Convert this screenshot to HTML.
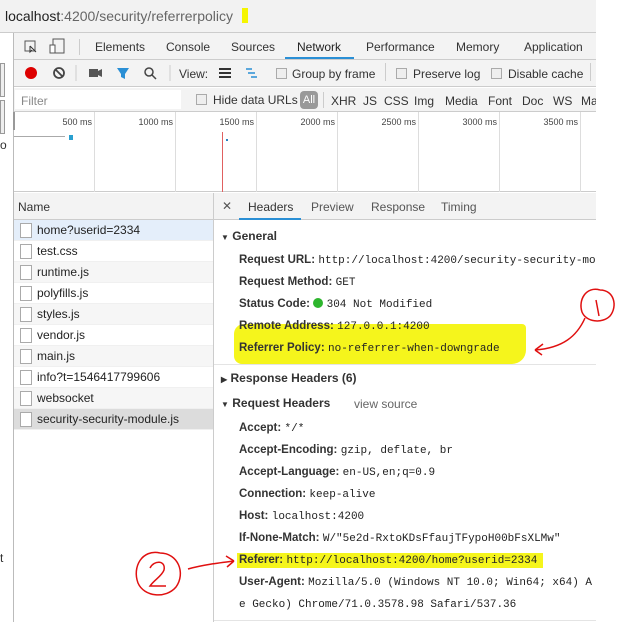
<!DOCTYPE html>
<html><head><style>
*{margin:0;padding:0;box-sizing:border-box}
body{width:617px;height:622px;overflow:hidden;background:#fff;position:relative;font-family:"Liberation Sans",sans-serif;font-size:12px;color:#303030}
.a{position:absolute;white-space:nowrap}
.m{font-family:"Liberation Mono",monospace;font-size:11px;color:#222}
.b{color:#333;font-weight:bold;font-size:11.5px}
.row{position:absolute;left:14px;width:199px;height:21px;line-height:21px;padding-left:23px;font-size:12px;color:#222;border-bottom:1px solid #f0f0f0}
.row i{position:absolute;left:6px;top:3px;width:12px;height:15px;border:1px solid #aaa;background:#fff}
.cb{position:absolute;width:11px;height:11px;border:1px solid #aaa;background:#eee}
</style></head><body>
<div class="a" style="left:0;top:0;width:596px;height:32px;background:#f2f2f2"></div>
<div class="a" style="left:5px;top:8px;font-size:14px;color:#222">localhost<span style="color:#666">:4200/security/referrerpolicy</span></div>
<div class="a" style="left:242px;top:8px;width:6px;height:15px;background:#f5f500"></div>
<div class="a" style="left:0;top:32px;width:596px;height:1px;background:#ccc"></div>
<div class="a" style="left:0;top:63px;width:5px;height:34px;border:1px solid #999;background:#eee"></div>
<div class="a" style="left:0;top:100px;width:5px;height:34px;border:1px solid #999;background:#eee"></div>
<div class="a" style="left:0;top:138px;font-size:12px">o</div>
<div class="a" style="left:0;top:551px;font-size:12px">t</div>
<div class="a" style="left:13px;top:33px;width:1px;height:589px;background:#bbb"></div>
<!-- tabs -->
<div class="a" style="left:14px;top:33px;width:582px;height:27px;background:#f3f3f3;border-bottom:1px solid #ccc"></div>
<svg class="a" style="left:0;top:33px" width="80" height="27"><rect x="25" y="8" width="10" height="10" fill="none" stroke="#555"/><path d="M30 13l6 6M30 13v6l2-2" stroke="#333" fill="none"/><rect x="53" y="6" width="11" height="14" fill="none" stroke="#555"/><rect x="50" y="12" width="5" height="8" fill="#fff" stroke="#555"/></svg>
<div class="a" style="left:79px;top:39px;width:1px;height:16px;background:#ccc"></div>
<div class="a" style="left:95px;top:40px;color:#333">Elements</div>
<div class="a" style="left:166px;top:40px;color:#333">Console</div>
<div class="a" style="left:231px;top:40px;color:#333">Sources</div>
<div class="a" style="left:297px;top:40px;color:#222">Network</div>
<div class="a" style="left:285px;top:57px;width:69px;height:2px;background:#2a8fd5"></div>
<div class="a" style="left:366px;top:40px;color:#333">Performance</div>
<div class="a" style="left:456px;top:40px;color:#333">Memory</div>
<div class="a" style="left:524px;top:40px;color:#333">Application</div>
<div class="a" style="left:14px;top:60px;width:582px;height:27px;background:#f3f3f3;border-bottom:1px solid #ccc"></div>
<svg class="a" style="left:0;top:60px" width="270" height="27"><circle cx="31" cy="13" r="6" fill="#d00"/><circle cx="59" cy="13" r="5" fill="none" stroke="#444" stroke-width="1.8"/><path d="M55 9l8 8" stroke="#444" stroke-width="1.8"/><line x1="76" y1="5" x2="76" y2="21" stroke="#ccc"/><rect x="89" y="9" width="9" height="8" fill="#555"/><path d="M98 11l4-2v8l-4-2z" fill="#555"/><path d="M117 8h12l-4 6v5l-4-2v-3z" fill="#2a8fd5"/><circle cx="149" cy="12" r="4" fill="none" stroke="#444" stroke-width="1.5"/><path d="M152 15l4 4" stroke="#444" stroke-width="1.5"/><line x1="170" y1="5" x2="170" y2="21" stroke="#ccc"/><path d="M219 9h12M219 13h12M219 17h12" stroke="#333" stroke-width="2"/><path d="M246 9h6M248 13h7M251 17h6" stroke="#2a8fd5" stroke-width="1.6"/></svg>
<div class="a" style="left:179px;top:67px;color:#333">View:</div>
<span class="cb" style="left:276px;top:68px"></span><div class="a" style="left:292px;top:67px;color:#333">Group by frame</div>
<div class="a" style="left:385px;top:63px;width:1px;height:18px;background:#ccc"></div>
<span class="cb" style="left:396px;top:68px"></span><div class="a" style="left:413px;top:67px;color:#333">Preserve log</div>
<span class="cb" style="left:491px;top:68px"></span><div class="a" style="left:508px;top:67px;color:#333">Disable cache</div>
<div class="a" style="left:590px;top:63px;width:1px;height:18px;background:#ccc"></div>
<div class="a" style="left:14px;top:88px;width:582px;height:24px;background:#f3f3f3;border-bottom:1px solid #ccc"></div>
<div class="a" style="left:15px;top:90px;width:166px;height:19px;background:#fff"></div>
<div class="a" style="left:21px;top:94px;color:#888">Filter</div>
<span class="cb" style="left:196px;top:94px"></span><div class="a" style="left:213px;top:93px;color:#333">Hide data URLs</div>
<div class="a" style="left:300px;top:91px;width:18px;height:18px;border-radius:4px;background:#999;color:#fff;font-size:11px;line-height:18px;text-align:center">All</div>
<div class="a" style="left:323px;top:92px;width:1px;height:16px;background:#ccc"></div>
<div class="a" style="left:331px;top:94px;color:#333">XHR</div>
<div class="a" style="left:363px;top:94px;color:#333">JS</div>
<div class="a" style="left:384px;top:94px;color:#333">CSS</div>
<div class="a" style="left:414px;top:94px;color:#333">Img</div>
<div class="a" style="left:445px;top:94px;color:#333">Media</div>
<div class="a" style="left:488px;top:94px;color:#333">Font</div>
<div class="a" style="left:522px;top:94px;color:#333">Doc</div>
<div class="a" style="left:553px;top:94px;color:#333">WS</div>
<div class="a" style="left:581px;top:94px;color:#333">Ma</div>
<!-- timeline -->
<div class="a" style="left:14px;top:112px;width:582px;height:80px;border-bottom:1px solid #ccc"></div>
<div class="a" style="left:13px;top:112px;width:2px;height:18px;background:#999"></div>
<div style="position:absolute;left:0;top:117px;font-size:9px;color:#444">
<span class="a" style="right:-92px;width:50px;text-align:right;left:42px">500 ms</span><span class="a" style="left:123px;width:50px;text-align:right">1000 ms</span><span class="a" style="left:204px;width:50px;text-align:right">1500 ms</span><span class="a" style="left:285px;width:50px;text-align:right">2000 ms</span><span class="a" style="left:366px;width:50px;text-align:right">2500 ms</span><span class="a" style="left:447px;width:50px;text-align:right">3000 ms</span><span class="a" style="left:528px;width:50px;text-align:right">3500 ms</span></div>
<div class="a" style="left:94px;top:112px;width:1px;height:80px;background:#ddd"></div>
<div class="a" style="left:175px;top:112px;width:1px;height:80px;background:#ddd"></div>
<div class="a" style="left:256px;top:112px;width:1px;height:80px;background:#ddd"></div>
<div class="a" style="left:337px;top:112px;width:1px;height:80px;background:#ddd"></div>
<div class="a" style="left:418px;top:112px;width:1px;height:80px;background:#ddd"></div>
<div class="a" style="left:499px;top:112px;width:1px;height:80px;background:#ddd"></div>
<div class="a" style="left:580px;top:112px;width:1px;height:80px;background:#ddd"></div>
<div class="a" style="left:222px;top:132px;width:1px;height:60px;background:#e06060"></div>
<div class="a" style="left:14px;top:136px;width:51px;height:1px;background:#aaa"></div>
<div class="a" style="left:69px;top:135px;width:4px;height:5px;background:#2aa0d0"></div>
<div class="a" style="left:226px;top:139px;width:2px;height:2px;background:#2a80c0"></div>
<!-- left list -->
<div class="a" style="left:14px;top:193px;width:199px;height:27px;background:#f3f3f3;border-bottom:1px solid #ccc"></div>
<div class="a" style="left:18px;top:200px;color:#333">Name</div>
<div class="a" style="left:213px;top:193px;width:1px;height:429px;background:#ccc"></div>
<div class="row" style="top:220px;background:#e4eefa"><i></i>home?userid=2334</div>
<div class="row" style="top:241px"><i></i>test.css</div>
<div class="row" style="top:262px;background:#f6f6f6"><i></i>runtime.js</div>
<div class="row" style="top:283px"><i></i>polyfills.js</div>
<div class="row" style="top:304px;background:#f6f6f6"><i></i>styles.js</div>
<div class="row" style="top:325px"><i></i>vendor.js</div>
<div class="row" style="top:346px;background:#f6f6f6"><i></i>main.js</div>
<div class="row" style="top:367px"><i></i>info?t=1546417799606</div>
<div class="row" style="top:388px;background:#f6f6f6"><i></i>websocket</div>
<div class="row" style="top:409px;background:#dcdcdc"><i></i>security-security-module.js</div>
<!-- right -->
<div class="a" style="left:214px;top:193px;width:382px;height:27px;background:#f3f3f3;border-bottom:1px solid #ccc"></div>
<div class="a" style="left:222px;top:199px;color:#555">✕</div>
<div class="a" style="left:248px;top:200px;color:#333">Headers</div>
<div class="a" style="left:239px;top:218px;width:62px;height:2px;background:#2a8fd5"></div>
<div class="a" style="left:311px;top:200px;color:#555">Preview</div>
<div class="a" style="left:371px;top:200px;color:#555">Response</div>
<div class="a" style="left:441px;top:200px;color:#555">Timing</div>
<div class="a" style="left:221px;top:229px;font-weight:bold;font-size:12px;color:#333"><span style="font-size:8px">▼</span> General</div>
<div class="a" style="left:234px;top:324px;width:292px;height:40px;background:#f5f51c;border-radius:10px 4px 14px 8px"></div>
<div class="a" style="left:239px;top:252px"><span class="b">Request URL:</span> <span class="m">http://localhost:4200/security-security-mo</span></div>
<div class="a" style="left:239px;top:274px"><span class="b">Request Method:</span> <span class="m">GET</span></div>
<div class="a" style="left:239px;top:296px"><span class="b">Status Code:</span> <span style="display:inline-block;width:10px;height:10px;border-radius:50%;background:#2db52d;vertical-align:-1px"></span> <span class="m">304 Not Modified</span></div>
<div class="a" style="left:239px;top:318px"><span class="b">Remote Address:</span> <span class="m">127.0.0.1:4200</span></div>
<div class="a" style="left:239px;top:340px"><span class="b">Referrer Policy:</span> <span class="m">no-referrer-when-downgrade</span></div>
<div class="a" style="left:214px;top:364px;width:382px;height:1px;background:#e4e4e4"></div>
<div class="a" style="left:221px;top:371px;font-weight:bold;color:#333"><span style="font-size:8px">▶</span> Response Headers (6)</div>
<div class="a" style="left:221px;top:396px;font-weight:bold;color:#333"><span style="font-size:8px">▼</span> Request Headers</div>
<div class="a" style="left:354px;top:397px;color:#666">view source</div>
<div class="a" style="left:237px;top:553px;width:306px;height:15px;background:#f5f51c"></div>
<div class="a" style="left:239px;top:420px"><span class="b">Accept:</span> <span class="m">*/*</span></div>
<div class="a" style="left:239px;top:442px"><span class="b">Accept-Encoding:</span> <span class="m">gzip, deflate, br</span></div>
<div class="a" style="left:239px;top:464px"><span class="b">Accept-Language:</span> <span class="m">en-US,en;q=0.9</span></div>
<div class="a" style="left:239px;top:486px"><span class="b">Connection:</span> <span class="m">keep-alive</span></div>
<div class="a" style="left:239px;top:508px"><span class="b">Host:</span> <span class="m">localhost:4200</span></div>
<div class="a" style="left:239px;top:530px"><span class="b">If-None-Match:</span> <span class="m">W/"5e2d-RxtoKDsFfaujTFypoH00bFsXLMw"</span></div>
<div class="a" style="left:239px;top:552px"><span class="b">Referer:</span> <span class="m">http://localhost:4200/home?userid=2334</span></div>
<div class="a" style="left:239px;top:574px"><span class="b">User-Agent:</span> <span class="m">Mozilla/5.0 (Windows NT 10.0; Win64; x64) A</span></div>
<div class="a" style="left:239px;top:596px"><span class="m">e Gecko) Chrome/71.0.3578.98 Safari/537.36</span></div>
<div class="a" style="left:214px;top:620px;width:382px;height:1px;background:#e4e4e4"></div>
<div class="a" style="left:596px;top:0;width:21px;height:622px;background:#fff"></div>
<svg class="a" style="left:0;top:0" width="617" height="622"><g fill="none" stroke="#e01010" stroke-width="1.5"><path d="M600 290c-14-4-22 10-18 22 4 10 20 12 28 4 8-10 4-26-10-26"/><path d="M596 300l3 16"/><path d="M585 318c-8 18-22 30-50 32M535 350l8-6M535 350l7 5"/><path d="M160 553c-18-4-28 14-22 30 6 14 28 16 38 4 10-14 2-34-16-34"/><path d="M150 568c4-8 16-8 14 2-2 6-10 10-14 16h16"/><path d="M188 569c14-4 30-6 46-8M234 561l-8-5M234 561l-7 6"/></g></svg>
</body></html>
